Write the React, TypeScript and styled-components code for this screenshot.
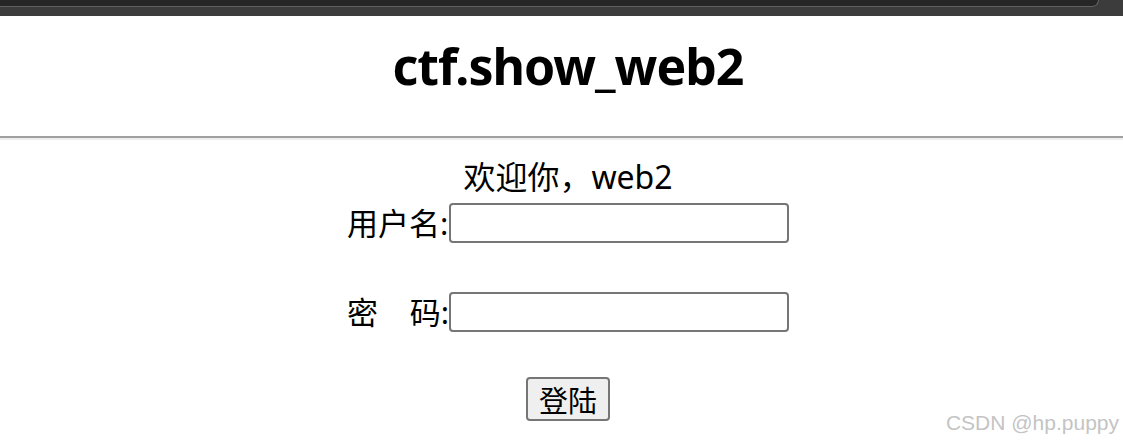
import React from "react";
import styled, { createGlobalStyle } from "styled-components";

const GlobalStyle = createGlobalStyle`
  html, body {
    margin: 0;
    padding: 0;
    background: #ffffff;
    overflow: hidden;
  }
  body {
    font-family: "Noto Sans", "Noto Sans CJK SC", sans-serif;
    color: #000000;
  }
`;

const Page = styled.div`
  position: relative;
  width: 1136px;
  height: 441px;
  overflow: hidden;
`;

const ChromeBar = styled.div`
  height: 16px;
  background: #3c3c3c;
`;

const ChromeTab = styled.div`
  width: 1098px;
  height: 6px;
  background: #262626;
  border-bottom: 1px solid #606060;
  border-right: 1px solid #606060;
  border-bottom-right-radius: 8px;
`;

const Header = styled.header`
  height: 120px;
  display: flex;
  align-items: center;
  justify-content: center;
`;

const Title = styled.h1`
  margin: 0 0 20px;
  font-size: 50px;
  font-weight: 700;
  letter-spacing: -1px;
  line-height: 1;
`;

const Rule = styled.hr`
  margin: 0;
  height: 0;
  border: none;
  border-top: 2px solid #a0a0a0;
  border-bottom: 2px solid #eeeeee;
`;

const Form = styled.form`
  display: flex;
  flex-direction: column;
  align-items: center;
  font-family: "Noto Sans", "Noto Sans CJK SC", sans-serif;
  font-size: 31px;
`;

const Welcome = styled.div`
  height: 40px;
  line-height: 40px;
  margin-top: 17px;
  font-size: 32px;
`;

const Row = styled.div<{ $gap: number }>`
  display: flex;
  align-items: center;
  margin-top: ${(p) => p.$gap}px;
`;

const Label = styled.label`
  width: 102px;
  display: flex;
  justify-content: space-between;
  line-height: 40px;
`;

const TextInput = styled.input`
  box-sizing: border-box;
  width: 340px;
  height: 40px;
  border: 2px solid #767676;
  border-radius: 4px;
  background: #ffffff;
  padding: 0 4px;
  font-size: 24px;
  outline: none;
`;

const Submit = styled.button`
  box-sizing: border-box;
  width: 84px;
  height: 44px;
  margin-top: 45px;
  padding: 0;
  border: 2px solid #767676;
  border-radius: 4px;
  background: #efefef;
  font-family: "Noto Sans CJK SC", sans-serif;
  font-size: 29px;
  line-height: 1;
  color: #000000;
`;

const Watermark = styled.div`
  position: absolute;
  right: 17px;
  bottom: 6px;
  font-family: "Liberation Sans", Arial, sans-serif;
  font-size: 21px;
  color: #c4c4c4;
`;

export default function App() {
  return (
    <>
      <GlobalStyle />
      <Page>
        <ChromeBar>
          <ChromeTab />
        </ChromeBar>
        <Header>
          <Title>ctf.show_web2</Title>
        </Header>
        <Rule />
        <Form onSubmit={(e) => e.preventDefault()}>
          <Welcome>欢迎你，web2</Welcome>
          <Row $gap={6}>
            <Label>
              <span>用户名:</span>
            </Label>
            <TextInput type="text" name="username" />
          </Row>
          <Row $gap={49}>
            <Label>
              <span>密</span>
              <span>码:</span>
            </Label>
            <TextInput type="password" name="password" />
          </Row>
          <Submit type="submit">登陆</Submit>
        </Form>
        <Watermark>CSDN @hp.puppy</Watermark>
      </Page>
    </>
  );
}
